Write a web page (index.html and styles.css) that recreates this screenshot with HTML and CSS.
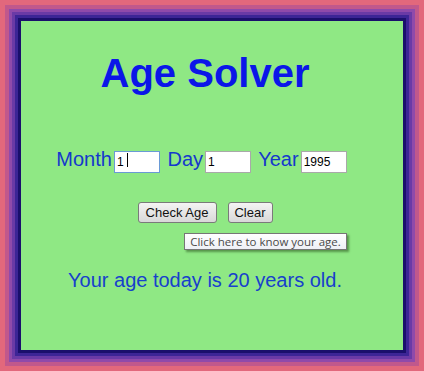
FILE: index.html
```html
<!DOCTYPE html>
<html>
<head>
<meta charset="utf-8">
<title>Age Solver</title>
<link rel="stylesheet" href="styles.css">
</head>
<body>
<div class="frame">
  <div class="panel">
    <h1 class="title">Age Solver</h1>
    <div class="fields">Month<span class="field spaced"><input class="box box-focus" type="text" value="1"><span class="caret"></span></span> Day<input class="box spaced" type="text" value="1"> Year<input class="box" type="text" value="1995"></div>
    <div class="actions">
      <button class="btn btn-check" type="button">Check Age</button>
      <button class="btn btn-clear" type="button">Clear</button>
      <div class="tip">Click here to know your age.</div>
    </div>
    <p class="result">Your age today is 20 years old.</p>
  </div>
</div>
</body>
</html>
```
FILE: styles.css
```css
html, body {
  margin: 0;
  padding: 0;
}
body {
  width: 424px;
  height: 371px;
  overflow: hidden;
  font-family: "Liberation Sans", Arial, sans-serif;
}
.frame {
  width: 424px;
  height: 371px;
  box-sizing: border-box;
  padding: 21px;
  background: #1b0f6f;
  box-shadow:
    inset 0 0 0 5px #e2687c,
    inset 0 0 0 9px #c0588c,
    inset 0 0 0 12px #8f4aaa,
    inset 0 0 0 15px #6a3aa6,
    inset 0 0 0 18px #3c2596,
    inset 0 0 0 21px #1a0f6c;
}
.panel {
  height: 100%;
  box-sizing: border-box;
  background: #8fe884;
  padding: 29px 14px 0 0;
  text-align: center;
}
.title {
  margin: 0;
  font-size: 40px;
  line-height: 46px;
  font-weight: bold;
  color: #0b16e8;
}
.fields {
  margin-top: 52px;
  font-size: 20px;
  line-height: 23px;
  color: #1538cc;
  padding-right: 7px;
}
.field {
  position: relative;
  display: inline-block;
}
.box {
  width: 46px;
  height: 22px;
  box-sizing: border-box;
  margin: 0 0 0 2px;
  padding: 0 2px;
  border: 1px solid #a9a9a9;
  background: #fff;
  font-family: "Liberation Sans", Arial, sans-serif;
  font-size: 12px;
  color: #000;
  outline: none;
}
.spaced {
  margin-right: 2px;
}
.box-focus {
  border-color: #6a9ad6;
}
.caret {
  position: absolute;
  left: 15px;
  top: 5px;
  width: 1px;
  height: 14px;
  background: #000;
}
.actions {
  position: relative;
  margin-top: 29px;
  display: flex;
  justify-content: center;
  gap: 11px;
}
.btn {
  height: 21px;
  box-sizing: border-box;
  padding: 0;
  border: 1px solid #7a7a7a;
  border-radius: 3px;
  background: linear-gradient(#f4f4f4, #e6e6e6 50%, #d8d8d8);
  font-family: "Liberation Sans", Arial, sans-serif;
  font-size: 13px;
  color: #111;
}
.btn-check {
  width: 79px;
}
.btn-clear {
  width: 45px;
}
.tip {
  position: absolute;
  left: 163px;
  top: 31px;
  width: 163px;
  height: 17px;
  box-sizing: border-box;
  border: 1px solid #767676;
  background: linear-gradient(#ffffff, #eef0f6);
  box-shadow: 2px 2px 2px rgba(40, 80, 30, 0.55);
  font-family: "Open Sans", sans-serif;
  font-size: 11.5px;
  line-height: 15px;
  color: #4a4a4a;
  text-align: center;
  white-space: nowrap;
}
.result {
  margin: 46px 0 0;
  font-size: 20px;
  line-height: 23px;
  color: #1740cc;
}
```
